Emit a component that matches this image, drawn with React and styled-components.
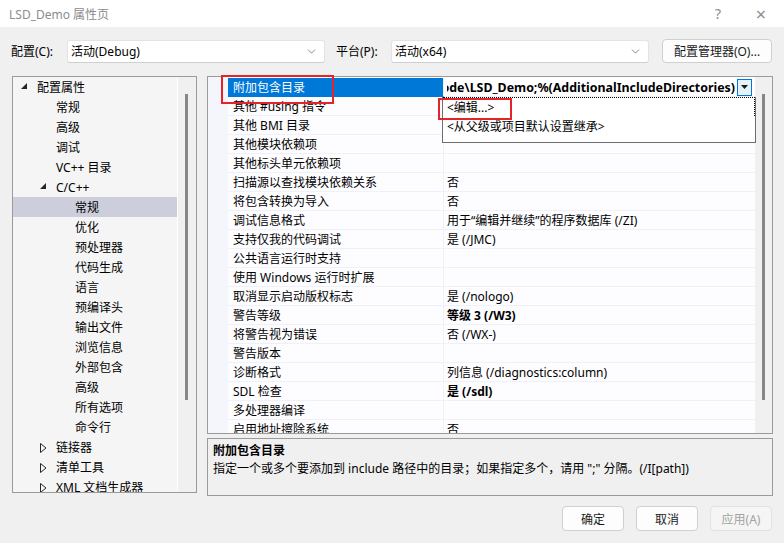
import React from 'react'
import styled, { createGlobalStyle } from 'styled-components'
import { ChevronDown } from 'lucide-react'

const GlobalStyle = createGlobalStyle`
  html, body {
    margin: 0;
    padding: 0;
    background: #f0f0f0;
  }
  body {
    font-family: "Segoe UI", "Noto Sans", "Noto Sans CJK SC", sans-serif;
    font-size: 12px;
    color: #000;
  }
  * { box-sizing: border-box; }
`

const Window = styled.div`
  position: relative;
  width: 784px;
  height: 543px;
  background: #f0f0f0;
  display: flex;
  flex-direction: column;
  overflow: hidden;
`

const TitleBar = styled.div`
  height: 27px;
  background: #fff;
  display: flex;
  align-items: center;
  padding-left: 9px;
  color: #8c8c8c;
  font-size: 12px;
`

const TitleText = styled.div`
  flex: 1;
`

const TitleButton = styled.div`
  width: ${(p) => p.w}px;
  margin-right: ${(p) => p.mr || 0}px;
  text-align: center;
  color: #8c8c8c;
  font-size: ${(p) => p.size}px;
  font-family: "Noto Sans", sans-serif;
`

const Toolbar = styled.div`
  display: flex;
  align-items: center;
  height: 24px;
  margin-top: 12px;
  padding-left: 11px;
`

const Label = styled.span`
  width: ${(p) => p.w}px;
  white-space: nowrap;
`

const Select = styled.div`
  width: 258px;
  height: 23px;
  background: #fff;
  border: 1px solid #e3e3e3;
  border-bottom-color: #cfcfcf;
  border-radius: 3px;
  display: flex;
  align-items: center;
  justify-content: space-between;
  padding: 0 6px 0 3px;
  margin-right: ${(p) => p.mr}px;
`

const PushButton = styled.div`
  width: ${(p) => p.w}px;
  height: ${(p) => p.h || 24}px;
  border: 1px solid ${(p) => (p.disabled ? '#e2e2e2' : '#d0d0d0')};
  border-radius: 4px;
  background: ${(p) => (p.disabled ? '#f5f5f5' : '#fdfdfd')};
  color: ${(p) => (p.disabled ? '#a2a2a2' : '#1a1a1a')};
  display: flex;
  align-items: center;
  justify-content: center;
`

const Main = styled.div`
  display: flex;
  gap: 10px;
  margin-top: 13px;
  padding-left: 12px;
`

const Tree = styled.div`
  width: 185px;
  height: 417px;
  border: 1px solid #9a9a9a;
  background: #f5f5f5;
  display: flex;
  overflow: hidden;
`

const TreeList = styled.div`
  width: 165px;
  border-right: 1px solid #ffffff;
`

const TreeRow = styled.div`
  height: 20px;
  display: flex;
  align-items: center;
  padding-left: ${(p) => 24 + p.level * 19}px;
  background: ${(p) => (p.selected ? '#cccedb' : 'transparent')};
  white-space: nowrap;
  position: relative;
`

const Twisty = styled.span`
  position: absolute;
  left: ${(p) => 8 + p.level * 19}px;
  top: 6px;
  width: 7px;
  height: 9px;
  display: flex;
`

const ScrollTrack = styled.div`
  width: ${(p) => p.w}px;
  position: relative;
  background: ${(p) => p.bg || 'transparent'};
`

const ScrollThumb = styled.div`
  position: absolute;
  left: ${(p) => p.left}px;
  top: 17px;
  width: 3px;
  height: 306px;
  background: #868686;
`

const RightCol = styled.div`
  display: flex;
  flex-direction: column;
  gap: 4px;
`

const Grid = styled.div`
  position: relative;
  width: 566px;
  height: 358px;
  border: 1px solid #9a9a9a;
  background: #fdfdff;
  display: flex;
  overflow: hidden;
`

const Gutter = styled.div`
  width: 20px;
  background: #f4f6fb;
`

const Rows = styled.div`
  width: 527px;
  padding-top: 1px;
`

const Row = styled.div`
  display: flex;
  height: 19px;
`

const NameCell = styled.div`
  width: 216px;
  padding-left: 5px;
  display: flex;
  align-items: center;
  white-space: nowrap;
  background: ${(p) => (p.selected ? '#0078d7' : 'transparent')};
  color: ${(p) => (p.selected ? '#fff' : '#000')};
  border-bottom: 1px solid ${(p) => (p.selected ? '#0078d7' : '#eef1f7')};
  border-right: 1px solid #eef1f7;
`

const ValueCell = styled.div`
  width: 311px;
  padding-left: 3px;
  display: flex;
  align-items: center;
  white-space: nowrap;
  font-weight: ${(p) => (p.bold ? 700 : 400)};
  border-bottom: 1px solid #eef1f7;
  background: ${(p) => (p.editing ? '#fff' : 'transparent')};
`

const EditText = styled.div`
  flex: 1;
  overflow: hidden;
  display: flex;
  justify-content: flex-end;
  font-weight: 700;
  font-size: 12.4px;
  padding-right: 2px;
`

const DropButton = styled.div`
  width: 15px;
  height: 17px;
  margin-right: 3px;
  border: 1px solid #0078d7;
  background: #e5f1fb;
  display: flex;
  align-items: center;
  justify-content: center;
`

const DropList = styled.div`
  position: absolute;
  left: 234px;
  top: 20px;
  width: 314px;
  height: 46px;
  background: #fff;
  border: 1px solid #6e6e6e;
  border-top: none;
`

const DropItem = styled.div`
  height: 19px;
  padding-left: 4px;
  display: flex;
  align-items: center;
  white-space: nowrap;
  border-top: 1px ${(p) => (p.focused ? 'dotted #000' : 'solid transparent')};
  border-right: 1px ${(p) => (p.focused ? 'dotted #000' : 'solid transparent')};
`

const Description = styled.div`
  width: 566px;
  height: 58px;
  border: 1px solid #9a9a9a;
  background: #f0f0f0;
  padding: 3px 0 0 5px;
  line-height: 18px;
`

const DescTitle = styled.div`
  font-weight: 700;
`

const Footer = styled.div`
  display: flex;
  justify-content: flex-end;
  gap: 12px;
  padding-right: 12px;
  margin-top: 10px;
`

const Annotation = styled.div`
  position: absolute;
  left: ${(p) => p.x}px;
  top: ${(p) => p.y}px;
  width: ${(p) => p.w}px;
  height: ${(p) => p.h}px;
  border: 2px solid #e5232b;
  pointer-events: none;
`

const Expanded = () => (
  <svg width="7" height="7" viewBox="0 0 7 7">
    <polygon points="6,0 6,6 0,6" fill="#262626" />
  </svg>
)

const Collapsed = () => (
  <svg width="7" height="10" viewBox="0 0 7 10">
    <polygon points="0.5,0.5 6,5 0.5,9.5" fill="none" stroke="#262626" strokeWidth="1" />
  </svg>
)

const treeItems = [
  { text: '配置属性', level: 0, twisty: 'open' },
  { text: '常规', level: 1 },
  { text: '高级', level: 1 },
  { text: '调试', level: 1 },
  { text: 'VC++ 目录', level: 1 },
  { text: 'C/C++', level: 1, twisty: 'open' },
  { text: '常规', level: 2, selected: true },
  { text: '优化', level: 2 },
  { text: '预处理器', level: 2 },
  { text: '代码生成', level: 2 },
  { text: '语言', level: 2 },
  { text: '预编译头', level: 2 },
  { text: '输出文件', level: 2 },
  { text: '浏览信息', level: 2 },
  { text: '外部包含', level: 2 },
  { text: '高级', level: 2 },
  { text: '所有选项', level: 2 },
  { text: '命令行', level: 2 },
  { text: '链接器', level: 1, twisty: 'closed' },
  { text: '清单工具', level: 1, twisty: 'closed' },
  { text: 'XML 文档生成器', level: 1, twisty: 'closed' },
]

const props = [
  ['附加包含目录', ''],
  ['其他 #using 指令', ''],
  ['其他 BMI 目录', ''],
  ['其他模块依赖项', ''],
  ['其他标头单元依赖项', ''],
  ['扫描源以查找模块依赖关系', '否'],
  ['将包含转换为导入', '否'],
  ['调试信息格式', '用于“编辑并继续”的程序数据库 (/ZI)'],
  ['支持仅我的代码调试', '是 (/JMC)'],
  ['公共语言运行时支持', ''],
  ['使用 Windows 运行时扩展', ''],
  ['取消显示启动版权标志', '是 (/nologo)'],
  ['警告等级', '等级 3 (/W3)', true],
  ['将警告视为错误', '否 (/WX-)'],
  ['警告版本', ''],
  ['诊断格式', '列信息 (/diagnostics:column)'],
  ['SDL 检查', '是 (/sdl)', true],
  ['多处理器编译', ''],
  ['启用地址擦除系统', '否'],
]

export default function App() {
  return (
    <>
      <GlobalStyle />
      <Window>
        <TitleBar>
          <TitleText>LSD_Demo 属性页</TitleText>
          <TitleButton w={28} size={14} mr={6}>?</TitleButton>
          <TitleButton w={46} size={18}>×</TitleButton>
        </TitleBar>

        <Toolbar>
          <Label w={56}>配置(C):</Label>
          <Select mr={11}>
            <span>活动(Debug)</span>
            <ChevronDown size={13} color="#555" strokeWidth={1.3} />
          </Select>
          <Label w={55}>平台(P):</Label>
          <Select mr={13}>
            <span>活动(x64)</span>
            <ChevronDown size={13} color="#555" strokeWidth={1.3} />
          </Select>
          <PushButton w={110}>配置管理器(O)...</PushButton>
        </Toolbar>

        <Main>
          <Tree>
            <TreeList>
              {treeItems.map((item, i) => (
                <TreeRow key={i} level={item.level} selected={item.selected}>
                  {item.twisty && (
                    <Twisty level={item.level}>
                      {item.twisty === 'open' ? <Expanded /> : <Collapsed />}
                    </Twisty>
                  )}
                  {item.text}
                </TreeRow>
              ))}
            </TreeList>
            <ScrollTrack w={18} bg="#f0f0f0">
              <ScrollThumb left={7} />
            </ScrollTrack>
          </Tree>

          <RightCol>
            <Grid>
              <Gutter />
              <Rows>
                {props.map(([name, value, bold], i) => (
                  <Row key={i}>
                    <NameCell selected={i === 0}>{name}</NameCell>
                    {i === 0 ? (
                      <ValueCell editing>
                        <EditText>
                          <span>Code\LSD_Demo;%(AdditionalIncludeDirectories)</span>
                        </EditText>
                        <DropButton>
                          <svg width="7" height="4" viewBox="0 0 7 4">
                            <polygon points="0,0 7,0 3.5,4" fill="#1a1a1a" />
                          </svg>
                        </DropButton>
                      </ValueCell>
                    ) : (
                      <ValueCell bold={bold}>{value}</ValueCell>
                    )}
                  </Row>
                ))}
              </Rows>
              <ScrollTrack w={17} bg="#f0f0f0">
                <ScrollThumb left={7} />
              </ScrollTrack>
              <DropList>
                <DropItem focused>&lt;编辑...&gt;</DropItem>
                <DropItem>&lt;从父级或项目默认设置继承&gt;</DropItem>
              </DropList>
            </Grid>

            <Description>
              <DescTitle>附加包含目录</DescTitle>
              <div>指定一个或多个要添加到 include 路径中的目录；如果指定多个，请用 ";" 分隔。(/I[path])</div>
            </Description>
          </RightCol>
        </Main>

        <Footer>
          <PushButton w={62} h={25}>确定</PushButton>
          <PushButton w={62} h={25}>取消</PushButton>
          <PushButton w={62} h={25} disabled>应用(A)</PushButton>
        </Footer>

        <Annotation x={221} y={75} w={113} h={29} />
        <Annotation x={438} y={98} w={74} h={22} />
      </Window>
    </>
  )
}
